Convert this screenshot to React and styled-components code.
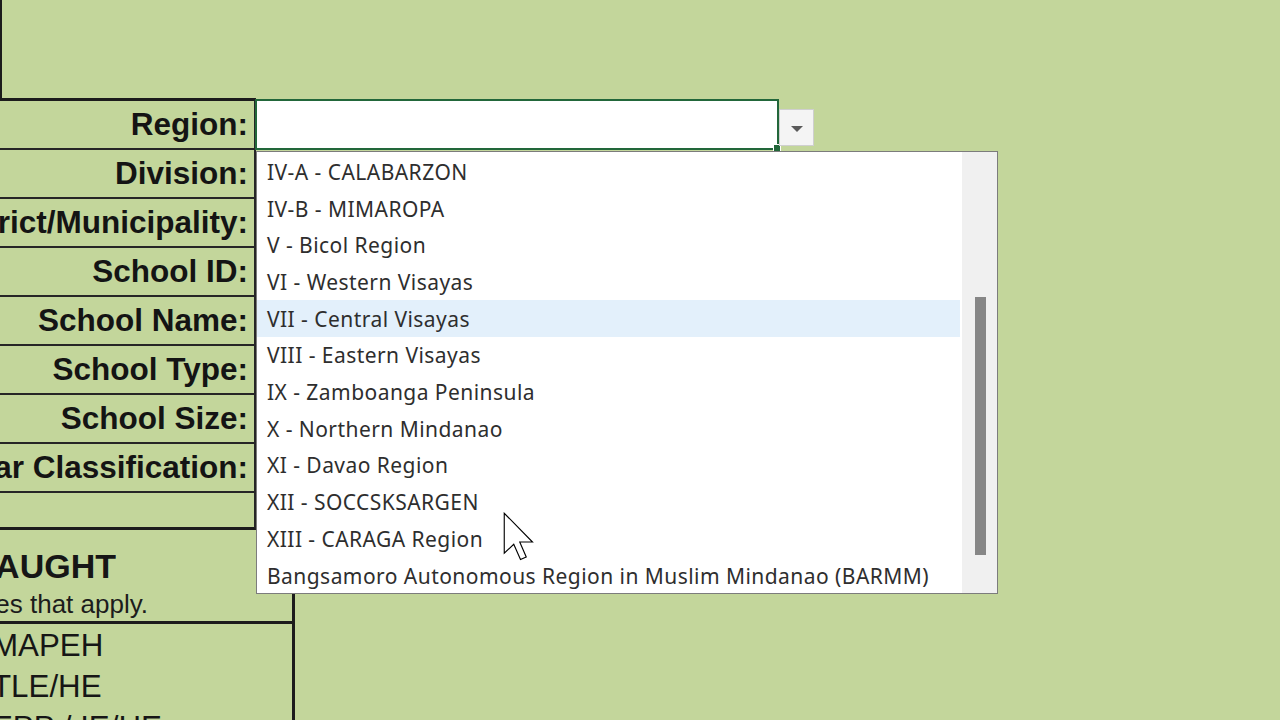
import React from "react";
import styled, { createGlobalStyle } from "styled-components";

const GlobalStyle = createGlobalStyle`
  html, body { margin: 0; padding: 0; }
  body {
    background: #c3d69b;
    font-family: "Liberation Sans", Arial, sans-serif;
    overflow: hidden;
  }
`;

const Page = styled.div`
  position: relative;
  width: 1280px;
  height: 720px;
  overflow: hidden;
  background: #c3d69b;
`;

const TopGap = styled.div`
  height: 98px;
  width: 0;
  border-left: 2px solid #1c1c1c;
`;

const Sheet = styled.div`
  display: flex;
  flex-direction: column;
`;

const FieldRow = styled.div`
  display: flex;
  align-items: flex-start;
  height: ${(p) => (p.$first ? 52 : 49)}px;
`;

const Label = styled.div`
  box-sizing: border-box;
  width: 256px;
  height: 100%;
  flex: none;
  display: flex;
  align-items: center;
  justify-content: flex-end;
  padding-right: 6px;
  overflow: hidden;
  white-space: nowrap;
  border-top: ${(p) => (p.$first ? "3px solid #1c1c1c" : "none")};
  border-bottom: 2px solid #262626;
  border-right: 2px solid #262626;
  font-weight: 700;
  font-size: 31.5px;
  color: #141414;
`;

const RegionCell = styled.div`
  position: relative;
  box-sizing: border-box;
  width: 524px;
  margin-left: -1px;
  margin-top: 1px;
  height: 51px;
  background: #ffffff;
  border: 2px solid #22673a;
`;

const Handle = styled.div`
  position: absolute;
  right: -4px;
  bottom: -4px;
  width: 6px;
  height: 6px;
  background: #22673a;
  border: 1px solid #ffffff;
`;

const DropButton = styled.div`
  position: absolute;
  left: calc(100% + 2px);
  top: 8px;
  box-sizing: border-box;
  width: 35px;
  height: 37px;
  background: #f4f4f4;
  border: 1px solid #cfcfcf;
  display: flex;
  align-items: center;
  justify-content: center;
`;

const Caret = styled.div`
  width: 0;
  height: 0;
  border-left: 6px solid transparent;
  border-right: 6px solid transparent;
  border-top: 6px solid #5a5a5a;
  margin-top: 2px;
`;

const ListBox = styled.div`
  position: absolute;
  left: -1px;
  top: calc(100% + 3px);
  box-sizing: border-box;
  width: 742px;
  height: 443px;
  background: #ffffff;
  border: 1px solid #7c7c7c;
  display: flex;
  z-index: 5;
`;

const Items = styled.div`
  flex: 1;
  padding-top: 1.6px;
  display: flex;
  flex-direction: column;
`;

const Item = styled.div`
  height: 36.7px;
  flex: none;
  display: flex;
  align-items: center;
  padding-left: 10px;
  margin-right: 2px;
  font-family: "Noto Sans", "Open Sans", sans-serif;
  font-size: 21px;
  letter-spacing: 0.45px;
  color: #2e2e2e;
  white-space: nowrap;
  background: ${(p) => (p.$active ? "#e3f0fb" : "transparent")};
`;

const ScrollTrack = styled.div`
  width: 35px;
  flex: none;
  background: #f0f0f0;
  position: relative;
`;

const ScrollThumb = styled.div`
  position: absolute;
  left: 13px;
  top: 145px;
  width: 11px;
  height: 258px;
  background: #868686;
`;

const EmptyRow = styled.div`
  box-sizing: border-box;
  width: 256px;
  height: 37px;
  border-right: 2px solid #262626;
  border-bottom: 3px solid #1c1c1c;
`;

const Section = styled.div`
  box-sizing: border-box;
  width: 295px;
  border-right: 3px solid #1c1c1c;
  overflow: hidden;
`;

const SectionHead = styled.div`
  box-sizing: border-box;
  height: 94px;
  border-bottom: 3px solid #1c1c1c;
  padding-top: 17px;
  display: flex;
  flex-direction: column;
`;

const Clip = styled.div`
  width: ${(p) => p.$w}px;
  overflow: hidden;
  display: flex;
  justify-content: flex-end;
  white-space: nowrap;
`;

const HeadText = styled.span`
  flex: none;
  font-weight: 700;
  font-size: 34px;
  line-height: 39px;
  color: #161616;
`;

const SubText = styled.span`
  flex: none;
  font-size: 26px;
  line-height: 40px;
  margin-top: 1px;
  color: #1c1c1c;
`;

const SubjectList = styled.div`
  padding-top: 1px;
  display: flex;
  flex-direction: column;
`;

const Subject = styled.div`
  margin-left: -8px;
  white-space: nowrap;
  font-size: 31.3px;
  line-height: 41px;
  height: 41px;
  color: #161616;
`;

const Cursor = styled.svg`
  position: absolute;
  left: 503px;
  top: 512px;
  z-index: 10;
`;

const labels = [
  "Division:",
  "District/Municipality:",
  "School ID:",
  "School Name:",
  "School Type:",
  "School Size:",
  "Curricular Classification:",
];

const regions = [
  "IV-A - CALABARZON",
  "IV-B - MIMAROPA",
  "V - Bicol Region",
  "VI - Western Visayas",
  "VII - Central Visayas",
  "VIII - Eastern Visayas",
  "IX - Zamboanga Peninsula",
  "X - Northern Mindanao",
  "XI - Davao Region",
  "XII - SOCCSKSARGEN",
  "XIII - CARAGA Region",
  "Bangsamoro Autonomous Region in Muslim Mindanao (BARMM)",
];

const subjects = ["MAPEH", "TLE/HE", "EPP / IE/HE"];

export default function App() {
  return (
    <Page>
      <GlobalStyle />
      <TopGap />
      <Sheet>
        <FieldRow $first>
          <Label $first>Region:</Label>
          <RegionCell>
            <Handle />
            <DropButton>
              <Caret />
            </DropButton>
            <ListBox>
              <Items>
                {regions.map((r) => (
                  <Item key={r} $active={r.startsWith("VII - ")}>
                    {r}
                  </Item>
                ))}
              </Items>
              <ScrollTrack>
                <ScrollThumb />
              </ScrollTrack>
            </ListBox>
          </RegionCell>
        </FieldRow>
        {labels.map((l) => (
          <FieldRow key={l}>
            <Label>{l}</Label>
          </FieldRow>
        ))}
        <EmptyRow />
        <Section>
          <SectionHead>
            <Clip $w={116}>
              <HeadText>SUBJECTS TAUGHT</HeadText>
            </Clip>
            <Clip $w={148}>
              <SubText>Check all boxes that apply.</SubText>
            </Clip>
          </SectionHead>
          <SubjectList>
            {subjects.map((s) => (
              <Subject key={s}>{s}</Subject>
            ))}
          </SubjectList>
        </Section>
      </Sheet>
      <Cursor width="34" height="50" viewBox="0 0 13.6 20">
        <path
          d="M0.5 0.5 L0.5 16.5 L4.3 12.9 L7 19 L9.3 18 L6.7 12 L11.8 12 Z"
          fill="#ffffff"
          stroke="#000000"
          strokeWidth="0.45"
          strokeLinejoin="miter"
        />
      </Cursor>
    </Page>
  );
}
